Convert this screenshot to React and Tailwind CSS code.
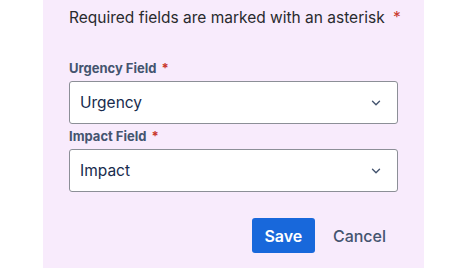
import React from "react";

const Chevron = () => (
  <svg width="14" height="14" viewBox="0 0 24 24" fill="none" stroke="#44546f" strokeWidth="2.4" strokeLinecap="round" strokeLinejoin="round">
    <path d="M6 9l6 6 6-6" />
  </svg>
);

const Select = ({ label, value }) => (
  <div>
    <p className="text-[13px] leading-[16px] font-bold text-[#44546f]">
      {label} <span className="text-[#c9372c] ml-[2px]">*</span>
    </p>
    <div className="mt-[5px] h-[43px] w-[329px] bg-white border border-[#8c8f97] rounded-[3px] flex items-center justify-between pl-[10px] pr-[14px]">
      <span className="text-[15.5px] text-[#172b4d]">{value}</span>
      <Chevron />
    </div>
  </div>
);

export default function App() {
  return (
    <div className="w-[474px] h-[269px] bg-white" style={{ fontFamily: "Inter, 'Noto Sans', sans-serif" }}>
      <div className="ml-[43px] w-[381px] h-[268px] bg-[#f8ebfc] pl-[26px] pt-[8px]">
        <p className="text-[15.5px] leading-[20px] text-[#292a2e]">
          Required fields are marked with an asterisk <span className="text-[#c9372c] ml-[4px]">*</span>
        </p>
        <div className="mt-[32px]">
          <Select label="Urgency Field" value="Urgency" />
        </div>
        <div className="mt-[4px]">
          <Select label="Impact Field" value="Impact" />
        </div>
        <div className="mt-[26px] w-[329px] flex justify-end items-center pr-[12px]">
          <button className="h-[35px] w-[63px] bg-[#1868db] text-white text-[16px] font-semibold rounded-[3px]">
            Save
          </button>
          <button className="ml-[18px] text-[16px] text-[#44546f] font-medium">Cancel</button>
        </div>
      </div>
    </div>
  );
}
